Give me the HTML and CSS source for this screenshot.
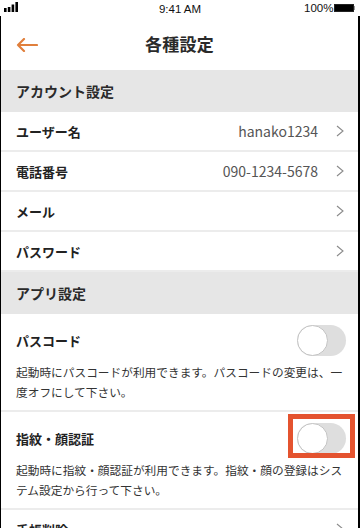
FILE: index.html
```html
<!DOCTYPE html>
<html lang="ja">
<head>
<meta charset="utf-8">
<title>各種設定</title>
<link rel="stylesheet" href="styles.css">
</head>
<body>
<div class="status">
  <svg class="signal" width="16" height="10" viewBox="0 0 16 10">
    <rect x="0" y="6" width="2.6" height="4" fill="#000"/>
    <rect x="3.8" y="5" width="2.6" height="5" fill="#000"/>
    <rect x="7.6" y="2.5" width="2.6" height="7.5" fill="#000"/>
    <rect x="11.4" y="0" width="2.6" height="10" fill="#000"/>
  </svg>
  <span class="time">9:41 AM</span>
  <span class="batt"><span class="pct">100%</span><span class="battery"><span class="cell"></span></span><span class="nub"></span></span>
</div>
<div class="screen">
  <header class="nav">
    <svg class="back" width="22" height="14" viewBox="0 0 22 14">
      <path d="M21 7H2M8 1L2 7l6 6" fill="none" stroke="#e07f3c" stroke-width="2.2" stroke-linecap="round" stroke-linejoin="round"/>
    </svg>
    <h1 class="title">各種設定</h1>
  </header>

  <div class="section">アカウント設定</div>
  <div class="row"><span class="label">ユーザー名</span><span class="value">hanako1234</span><svg class="chev" width="8" height="12" viewBox="0 0 8 12"><path d="M1 1l6 5-6 5" fill="none" stroke="#8a8a8a" stroke-width="1.1"/></svg></div>
  <div class="row"><span class="label">電話番号</span><span class="value">090-1234-5678</span><svg class="chev" width="8" height="12" viewBox="0 0 8 12"><path d="M1 1l6 5-6 5" fill="none" stroke="#8a8a8a" stroke-width="1.1"/></svg></div>
  <div class="row"><span class="label">メール</span><span class="value"></span><svg class="chev" width="8" height="12" viewBox="0 0 8 12"><path d="M1 1l6 5-6 5" fill="none" stroke="#8a8a8a" stroke-width="1.1"/></svg></div>
  <div class="row"><span class="label">パスワード</span><span class="value"></span><svg class="chev" width="8" height="12" viewBox="0 0 8 12"><path d="M1 1l6 5-6 5" fill="none" stroke="#8a8a8a" stroke-width="1.1"/></svg></div>

  <div class="section">アプリ設定</div>
  <div class="trow">
    <div class="thead"><span class="label">パスコード</span><span class="toggle"><span class="knob"></span></span></div>
    <p class="desc">起動時にパスコードが利用できます。パスコードの変更は、一度オフにして下さい。</p>
  </div>
  <div class="trow">
    <div class="thead"><span class="label">指紋・顔認証</span><span class="toggle marked"><span class="knob"></span></span></div>
    <p class="desc">起動時に指紋・顔認証が利用できます。指紋・顔の登録はシステム設定から行って下さい。</p>
  </div>
  <div class="row"><span class="label">手帳削除</span><span class="value"></span><svg class="chev" width="8" height="12" viewBox="0 0 8 12"><path d="M1 1l6 5-6 5" fill="none" stroke="#8a8a8a" stroke-width="1.1"/></svg></div>
</div>
</body>
</html>
```

FILE: styles.css
```css
*, *::before, *::after { box-sizing: border-box; }
html, body { margin: 0; padding: 0; background: #fff; }
body {
  width: 360px;
  height: 528px;
  overflow: hidden;
  font-family: "Noto Sans CJK JP", "Noto Sans", sans-serif;
  color: #222;
}
.status {
  height: 16px;
  display: flex;
  align-items: center;
  justify-content: space-between;
  padding: 0 5px 0 4px;
  font-family: "Liberation Sans", Arial, sans-serif;
  font-size: 11.5px;
  color: #111;
  position: relative;
}
.signal { margin-top: -3px; }
.time { position: absolute; left: 0; right: 0; text-align: center; top: 1px; line-height: 16px; }
.batt { display: flex; align-items: center; }
.battery {
  width: 20px; height: 8px;
  border: 1px solid #222;
  display: flex;
}
.cell { flex: 1; background: #000; }
.nub { width: 1.5px; height: 4px; background: #999; }

.screen {
  border-left: 1px solid #000;
  border-right: 2px solid #000;
  height: 512px;
  overflow: hidden;
}
.nav {
  height: 54px;
  display: flex;
  align-items: center;
  justify-content: center;
  position: relative;
}
.back { position: absolute; left: 15px; top: 22px; }
.title {
  margin: 0;
  font-size: 17px;
  font-weight: 700;
  color: #2a2a2a;
  letter-spacing: 0.3px;
}
.section {
  height: 42px;
  background: #e6e6e6;
  display: flex;
  align-items: center;
  padding-left: 15px;
  font-size: 14px;
  font-weight: 700;
  color: #2a2a2a;
}
.row {
  height: 40px;
  border-bottom: 2px solid #ececec;
  display: flex;
  align-items: center;
  padding: 0 14px 0 15px;
}
.label {
  font-size: 13px;
  font-weight: 700;
  color: #222;
  flex: 1;
}
.value {
  font-size: 14px;
  color: #555;
  margin-right: 18px;
}
.chev { display: block; }
.trow {
  border-bottom: 2px solid #ececec;
  padding: 11px 0 8px 15px;
}
.thead {
  height: 31px;
  display: flex;
  align-items: center;
  padding-right: 12px;
}
.toggle {
  position: relative;
  width: 49px;
  height: 31px;
  border-radius: 16px;
  background: #dedede;
  display: block;
}
.knob {
  position: absolute;
  left: 0; top: 0;
  width: 31px; height: 31px;
  border-radius: 50%;
  background: #fff;
  border: 1.5px solid #c4c4c4;
}
.marked::after {
  content: "";
  position: absolute;
  left: -9px; top: -9px;
  width: 67px; height: 44px;
  border: 5px solid #e4532f;
}
.desc {
  margin: 6px 0 0 0;
  padding-right: 10px;
  font-size: 11.7px;
  line-height: 20px;
  color: #333;
}
```
